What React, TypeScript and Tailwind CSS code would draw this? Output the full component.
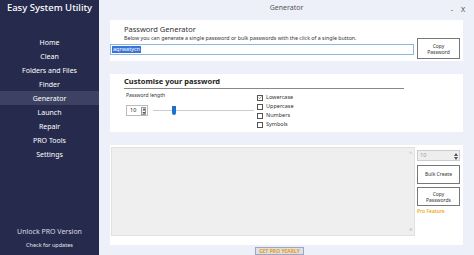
import React from "react";

const nav = ["Home", "Clean", "Folders and Files", "Finder", "Generator", "Launch", "Repair", "PRO Tools", "Settings"];

function Check({ label, checked }: { label: string; checked?: boolean }) {
  return (
    <div className="flex items-center h-[9px] gap-[3px]">
      <div className="w-[6px] h-[6px] border border-[#555] bg-white flex items-center justify-center">
        {checked && (
          <svg width="5" height="5" viewBox="0 0 10 10">
            <path d="M1.5 5.2 L4 7.8 L8.8 2" stroke="#444" strokeWidth="1.4" fill="none" />
          </svg>
        )}
      </div>
      <span className="text-[5.5px] text-[#333] leading-none">{label}</span>
    </div>
  );
}

function Spin({ className }: { className: string }) {
  return (
    <div className={"flex flex-col items-center justify-center gap-[1px] " + className}>
      <svg width="4" height="3" viewBox="0 0 4 3"><path d="M0 3 L2 0 L4 3 Z" fill="#555" /></svg>
      <svg width="4" height="3" viewBox="0 0 4 3"><path d="M0 0 L2 3 L4 0 Z" fill="#555" /></svg>
    </div>
  );
}

export default function App() {
  return (
    <div className="w-[474px] h-[255px] flex overflow-hidden" style={{ fontFamily: '"Noto Sans", "Open Sans", sans-serif' }}>
      <aside className="w-[99px] h-full bg-[#262b4d] flex flex-col text-white">
        <div className="h-[35px] pt-[2px] text-center text-[9.5px] font-medium leading-[12px]">Easy System Utility</div>
        <nav className="flex flex-col">
          {nav.map((n) => (
            <div
              key={n}
              className={
                "h-[14px] flex items-center justify-center text-[7px] leading-none " +
                (n === "Generator" ? "bg-[#3d4262]" : "")
              }
            >
              {n}
            </div>
          ))}
        </nav>
        <div className="flex-1" />
        <div className="flex flex-col items-center pb-[6px]">
          <div className="text-[7px] leading-[10px] text-[#d8dae4]">Unlock PRO Version</div>
          <div className="text-[5.5px] leading-[8px] mt-[4px] text-[#e4e6ee]">Check for updates</div>
        </div>
      </aside>

      <main className="flex-1 h-full bg-[#edf0f8] flex flex-col">
        <div className="h-[20px] relative flex items-center justify-center">
          <span className="text-[7px] text-[#555] leading-none -mt-[6px]">Generator</span>
          <div className="absolute right-[9px] top-[6px] flex gap-[8px] text-[7px] text-[#444] leading-none">
            <span>-</span>
            <span>X</span>
          </div>
        </div>

        <section className="ml-[11px] mr-[11px] h-[41px] bg-white flex">
          <div className="w-[304px] flex flex-col">
            <div className="pl-[14px] pt-[4px] text-[7.5px] leading-[10px] text-[#333]">Password Generator</div>
            <div className="pl-[14px] text-[5.3px] leading-[8px] text-[#333]">
              Below you can generate a single password or bulk passwords with the click of a single button.
            </div>
            <div className="mt-[2px] h-[11px] border border-[#8fb6dd] flex items-center px-[1px]">
              <span className="bg-[#3875d7] text-white text-[5.5px] leading-[7px] px-[1px]">aqrwatycn</span>
            </div>
          </div>
          <div className="ml-[3px] mt-[18px] w-[43px] h-[21px] border border-[#777] bg-white flex flex-col items-center justify-center text-[5px] leading-[6px] text-[#333]">
            <span>Copy</span>
            <span>Password</span>
          </div>
        </section>

        <section className="ml-[11px] mr-[11px] mt-[13px] h-[58px] bg-white flex flex-col">
          <div className="ml-[14px] w-[280px] pt-[2px] pb-[2px] border-b border-[#888] text-[7.5px] font-bold leading-[10px] text-[#222]">
            Customise your password
          </div>
          <div className="flex">
            <div className="flex flex-col ml-[16px] w-[128px]">
              <div className="mt-[3px] text-[5px] leading-[7px] text-[#333]">Password length</div>
              <div className="mt-[6px] flex items-center">
                <div className="w-[22px] h-[11px] border border-[#bbb] flex items-center pl-[3px] relative">
                  <span className="text-[5.5px] leading-none text-[#222]">10</span>
                  <Spin className="absolute right-[1px] top-[1px] w-[5px] h-[8px] border border-[#999]" />
                </div>
                <div className="ml-[5px] flex-1 h-[10px] relative flex items-center">
                  <div className="w-full h-[1px] bg-[#ccc]" />
                  <div className="absolute left-[19px] top-[0px] w-[4px] h-[9px] bg-[#1f6fd0] rounded-b-[2px]" />
                </div>
              </div>
            </div>
            <div className="ml-[3px] mt-[4px] flex flex-col">
              <Check label="Lowercase" checked />
              <Check label="Uppercase" />
              <Check label="Numbers" />
              <Check label="Symbols" />
            </div>
          </div>
        </section>

        <section className="ml-[11px] mr-[11px] mt-[13px] h-[100px] bg-white flex">
          <div className="ml-[1px] mt-[2px] w-[304px] h-[89px] bg-[#efefef] border border-[#e0e0e0] relative">
            <span className="absolute right-[2px] top-[3px] text-[5px] leading-none text-[#aaa]">^</span>
            <span className="absolute right-[2px] bottom-[3px] text-[5px] leading-none text-[#aaa]">v</span>
          </div>
          <div className="ml-[2px] mt-[5px] w-[43px] flex flex-col">
            <div className="h-[11px] bg-[#eeeeee] border border-[#ccc] flex items-center pl-[2px] relative">
              <span className="text-[5.5px] leading-none text-[#999]">10</span>
              <Spin className="absolute right-[1px] top-[1px] w-[4px] h-[8px]" />
            </div>
            <div className="mt-[4px] h-[19px] border border-[#777] flex items-center justify-center text-[5px] text-[#333] leading-none">
              Bulk Create
            </div>
            <div className="mt-[3px] h-[19px] border border-[#777] flex flex-col items-center justify-center text-[5px] leading-[6px] text-[#333]">
              <span>Copy</span>
              <span>Passwords</span>
            </div>
            <div className="mt-[3px] text-[5px] leading-none text-[#f0a000] font-medium">Pro Feature</div>
          </div>
        </section>

        <div className="flex justify-center mt-[2px]">
          <div className="ml-[-14px] px-[3px] h-[8px] bg-[#dbe0ec] border border-[#9ca6c2] flex items-center text-[5px] leading-none text-[#f09a00] font-bold">
            GET PRO YEARLY
          </div>
        </div>
      </main>
    </div>
  );
}
